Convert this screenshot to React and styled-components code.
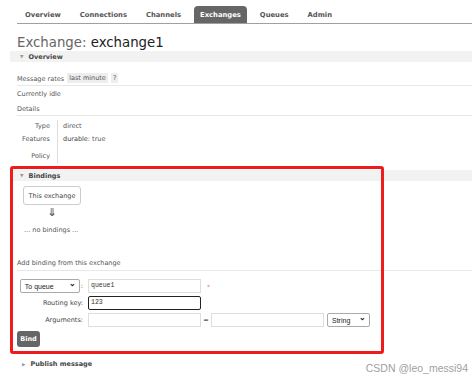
import React from 'react';
import styled, { createGlobalStyle } from 'styled-components';

const GlobalStyle = createGlobalStyle`
  html, body {
    margin: 0;
    padding: 0;
    background: #ffffff;
  }
  body {
    font-family: "DejaVu Sans", Verdana, sans-serif;
    color: #555555;
    font-size: 6.5px;
  }
`;

function App() {
  return (
    <>
      <GlobalStyle />
      <Page>
        <Nav>
          <Tab>Overview</Tab>
          <Tab>Connections</Tab>
          <Tab>Channels</Tab>
          <Tab active>Exchanges</Tab>
          <Tab>Queues</Tab>
          <Tab>Admin</Tab>
        </Nav>

        <Title>
          <span>Exchange:</span> <b>exchange1</b>
        </Title>

        <SectionBar><Arrow>▼</Arrow>Overview</SectionBar>
        <Row h={24} line>
          Message rates <Chip>last minute</Chip> <Chip>?</Chip>
        </Row>
        <Row h={15}>Currently idle</Row>
        <Row h={15} line>Details</Row>
        <Facts>
          <FactLabel>Type</FactLabel>
          <FactValue>direct</FactValue>
          <FactLabel>Features</FactLabel>
          <FactValue><Key>durable:</Key> true</FactValue>
          <FactLabel tall>Policy</FactLabel>
          <FactValue tall></FactValue>
        </Facts>

        <Highlighted>
          <SectionBar><Arrow>▼</Arrow>Bindings</SectionBar>
          <BindingsBody>
            <ThisExchange>This exchange</ThisExchange>
            <DownArrow>⇓</DownArrow>
            <NoBindings>... no bindings ...</NoBindings>
          </BindingsBody>
          <SubHeading>Add binding from this exchange</SubHeading>
          <Form>
            <FormRow>
              <LabelCell>
                <Select w={60}>To queue <Chev>⌄</Chev></Select>:
              </LabelCell>
              <Input>queue1</Input>
              <Star>*</Star>
            </FormRow>
            <FormRow>
              <LabelCell>Routing key:</LabelCell>
              <Input focused>123</Input>
            </FormRow>
            <FormRow>
              <LabelCell>Arguments:</LabelCell>
              <Input />
              <Eq>=</Eq>
              <Input />
              <Select w={43} ml={3}>String <Chev>⌄</Chev></Select>
            </FormRow>
          </Form>
          <BindButton>Bind</BindButton>
          <RedFrame />
        </Highlighted>

        <Collapsed><Arrow>▶</Arrow>Publish message</Collapsed>
        <Watermark>CSDN @leo_messi94</Watermark>
      </Page>
    </>
  );
}

const Page = styled.div`
  position: relative;
  width: 474px;
  height: 377px;
  overflow: hidden;
  padding: 6px 2px 0 10px;
  box-sizing: border-box;
`;

const Nav = styled.div`
  display: flex;
  align-items: flex-end;
  margin-left: 7px;
  height: 17px;
  border-bottom: 1px solid #a0a0a0;
  gap: 7px;
`;

const Tab = styled.div`
  height: 17px;
  line-height: 18px;
  padding: 0 6px;
  font-weight: bold;
  font-size: 6.8px;
  color: ${p => (p.active ? '#ffffff' : '#555555')};
  background: ${p => (p.active ? '#666666' : 'transparent')};
  border-radius: 4px 4px 0 0;
  &:first-child { margin-left: 2px; }
`;

const Title = styled.h1`
  margin: 11px 0 0 7px;
  font-weight: normal;
  font-size: 13.3px;
  line-height: 16px;
  color: #555555;
  span { color: #666666; }
  b { font-weight: normal; color: #222222; }
`;

const SectionBar = styled.div`
  display: flex;
  align-items: center;
  height: 11px;
  background: #f2f2f2;
  font-weight: bold;
  font-size: 6.5px;
  color: #444444;
  padding-left: 10px;
`;

const Arrow = styled.span`
  font-size: 4.5px;
  color: #999999;
  margin-right: 5px;
`;

const Row = styled.div`
  margin-left: 7px;
  height: ${p => p.h}px;
  box-sizing: border-box;
  display: flex;
  align-items: flex-end;
  padding-bottom: 2px;
  border-bottom: ${p => (p.line ? '1px solid #e8e8e8' : '1px solid transparent')};
  gap: 3px;
`;

const Chip = styled.span`
  background: #eeeeee;
  padding: 1px 2px;
`;

const Facts = styled.div`
  display: grid;
  grid-template-columns: 40px 1fr;
  margin-left: 7px;
  margin-top: 4px;
  width: 200px;
`;

const FactLabel = styled.div`
  text-align: right;
  padding-right: 7px;
  height: ${p => (p.tall ? '17px' : '13px')};
  line-height: ${p => (p.tall ? '20px' : '13px')};
  color: #555555;
`;

const FactValue = styled.div`
  border-left: 1px solid #dddddd;
  padding-left: 5px;
  height: ${p => (p.tall ? '17px' : '13px')};
  line-height: 13px;
`;

const Key = styled.span`
  color: #444444;
`;

const Highlighted = styled.div`
  position: relative;
  margin-top: 6px;
  padding-top: 1px;
`;

const RedFrame = styled.div`
  position: absolute;
  left: 0;
  top: -3px;
  width: 374px;
  height: 188px;
  border: 3px solid #ee1c1c;
  border-radius: 3px;
  box-sizing: border-box;
  pointer-events: none;
`;

const BindingsBody = styled.div`
  padding: 5px 0 0 13px;
`;

const ThisExchange = styled.div`
  display: inline-flex;
  align-items: center;
  justify-content: center;
  width: 58px;
  height: 19px;
  border: 1px solid #cccccc;
  border-radius: 3px;
  box-sizing: border-box;
  color: #444444;
`;

const DownArrow = styled.div`
  width: 58px;
  text-align: center;
  font-size: 11px;
  line-height: 12px;
  margin-top: 2px;
  color: #333333;
`;

const NoBindings = styled.div`
  margin-top: 7px;
  margin-left: 1px;
`;

const SubHeading = styled.div`
  margin: 25px 0 0 7px;
  padding-bottom: 3px;
  border-bottom: 1px solid #e8e8e8;
`;

const Form = styled.div`
  margin: 8px 0 0 6px;
  display: flex;
  flex-direction: column;
  gap: 3px;
`;

const FormRow = styled.div`
  display: flex;
  align-items: center;
  height: 14px;
`;

const LabelCell = styled.div`
  width: 72px;
  padding-right: 5px;
  box-sizing: border-box;
  display: flex;
  align-items: center;
  justify-content: flex-end;
  gap: 1px;
  color: #444444;
`;

const Select = styled.div`
  width: ${p => p.w}px;
  height: 14px;
  margin-left: ${p => p.ml || 0}px;
  border: 1px solid #aaaaaa;
  border-radius: 2px;
  box-sizing: border-box;
  display: flex;
  align-items: center;
  justify-content: space-between;
  padding: 0 3px 0 4px;
  font-family: "Liberation Sans", Arial, sans-serif;
  font-size: 7px;
  color: #222222;
  background: #ffffff;
`;

const Chev = styled.span`
  font-size: 8px;
  line-height: 6px;
  margin-top: -4px;
  font-weight: bold;
`;

const Input = styled.div`
  width: 113px;
  height: 14px;
  box-sizing: border-box;
  border: ${p => (p.focused ? '1.5px solid #222222' : '1px solid #dddddd')};
  border-radius: ${p => (p.focused ? '2px' : '0')};
  padding: 0 2px;
  font-family: "Liberation Mono", "Courier New", monospace;
  font-size: 6.5px;
  line-height: 11px;
  color: #333333;
`;

const Star = styled.span`
  color: #e07070;
  margin-left: 6px;
  font-size: 6px;
`;

const Eq = styled.span`
  width: 10px;
  text-align: center;
  color: #555555;
`;

const BindButton = styled.div`
  margin: 4px 0 0 7px;
  width: 23px;
  height: 16px;
  background: #666666;
  border-radius: 3px;
  color: #ffffff;
  font-weight: bold;
  font-size: 6.5px;
  display: flex;
  align-items: center;
  justify-content: center;
`;

const Collapsed = styled.div`
  margin: 13px 0 0 12px;
  font-weight: bold;
  color: #444444;
  display: flex;
  align-items: center;
`;

const Watermark = styled.div`
  position: absolute;
  right: 6px;
  bottom: 3px;
  font-family: "Liberation Sans", Arial, sans-serif;
  font-size: 10.5px;
  color: #a0a0a0;
`;

export default App;
